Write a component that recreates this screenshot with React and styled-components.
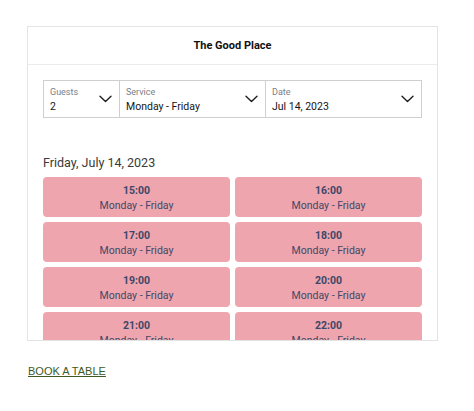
import React from 'react'
import styled, { createGlobalStyle } from 'styled-components'

const GlobalStyle = createGlobalStyle`
  body {
    margin: 0;
    background: #fff;
    font-family: Roboto, "Liberation Sans", sans-serif;
  }
`

const slots = ['15:00', '16:00', '17:00', '18:00', '19:00', '20:00', '21:00', '22:00']

const Chevron = () => (
  <svg width="13" height="8" viewBox="0 0 13 8" fill="none">
    <path d="M1 1.2 L6.5 6.5 L12 1.2" stroke="#1f1f1f" strokeWidth="1.4" strokeLinecap="round" strokeLinejoin="round" />
  </svg>
)

const App = () => {
  return (
    <Page>
      <GlobalStyle />
      <Widget>
        <Header>The Good Place</Header>
        <Body>
          <Selects>
            <SelectField $width="75px">
              <FieldText>
                <Label>Guests</Label>
                <Value>2</Value>
              </FieldText>
              <Chevron />
            </SelectField>
            <SelectField $width="146px">
              <FieldText>
                <Label>Service</Label>
                <Value>Monday - Friday</Value>
              </FieldText>
              <Chevron />
            </SelectField>
            <SelectField>
              <FieldText>
                <Label>Date</Label>
                <Value>Jul 14, 2023</Value>
              </FieldText>
              <Chevron />
            </SelectField>
          </Selects>
          <DayTitle>Friday, July 14, 2023</DayTitle>
          <SlotGrid>
            {slots.map((s) => (
              <Slot key={s}>
                <SlotTime>{s}</SlotTime>
                <SlotService>Monday - Friday</SlotService>
              </Slot>
            ))}
          </SlotGrid>
        </Body>
      </Widget>
      <BookLink href="#">BOOK A TABLE</BookLink>
    </Page>
  )
}

const Page = styled.div`
  padding: 26px 0 0 27px;
`

const Widget = styled.div`
  width: 409px;
  height: 313px;
  border: 1px solid #e4e4e4;
  overflow: hidden;
  background: #fff;
`

const Header = styled.div`
  height: 37px;
  border-bottom: 1px solid #ececec;
  display: flex;
  align-items: center;
  justify-content: center;
  font-size: 11px;
  font-weight: 700;
  color: #111;
`

const Body = styled.div`
  padding: 15px 15px 0 15px;
`

const Selects = styled.div`
  display: flex;
  height: 38px;
  border: 1px solid #cfcfcf;
  box-sizing: border-box;
`

const SelectField = styled.div`
  flex: ${(p) => (p.$width ? `0 0 ${p.$width}` : '1')};
  display: flex;
  align-items: center;
  justify-content: space-between;
  padding: 0 7px 0 6px;
  box-sizing: border-box;
  & + & {
    border-left: 1px solid #cfcfcf;
  }
`

const FieldText = styled.div`
  display: flex;
  flex-direction: column;
  gap: 2px;
  padding-top: 1px;
`

const Label = styled.span`
  font-size: 9px;
  color: #7a7e88;
  line-height: 12px;
`

const Value = styled.span`
  font-size: 10.5px;
  color: #151515;
  line-height: 14px;
`

const DayTitle = styled.div`
  margin-top: 36px;
  font-size: 12.5px;
  color: #3a3a3a;
  line-height: 18px;
`

const SlotGrid = styled.div`
  margin-top: 5px;
  display: grid;
  grid-template-columns: 1fr 1fr;
  column-gap: 5px;
  row-gap: 5px;
`

const Slot = styled.div`
  height: 40px;
  background: #eea5ae;
  border-radius: 4px;
  display: flex;
  flex-direction: column;
  align-items: center;
  justify-content: center;
  gap: 2px;
  padding-top: 1px;
  box-sizing: border-box;
  color: #3d4868;
`

const SlotTime = styled.span`
  font-size: 10.5px;
  font-weight: 700;
  line-height: 13px;
`

const SlotService = styled.span`
  font-size: 10.5px;
  line-height: 13px;
`

const BookLink = styled.a`
  display: inline-block;
  margin-top: 24px;
  margin-left: 1px;
  font-family: "Liberation Sans", Arial, sans-serif;
  font-size: 11px;
  color: #3e5a22;
  text-decoration: underline;
`

export default App
